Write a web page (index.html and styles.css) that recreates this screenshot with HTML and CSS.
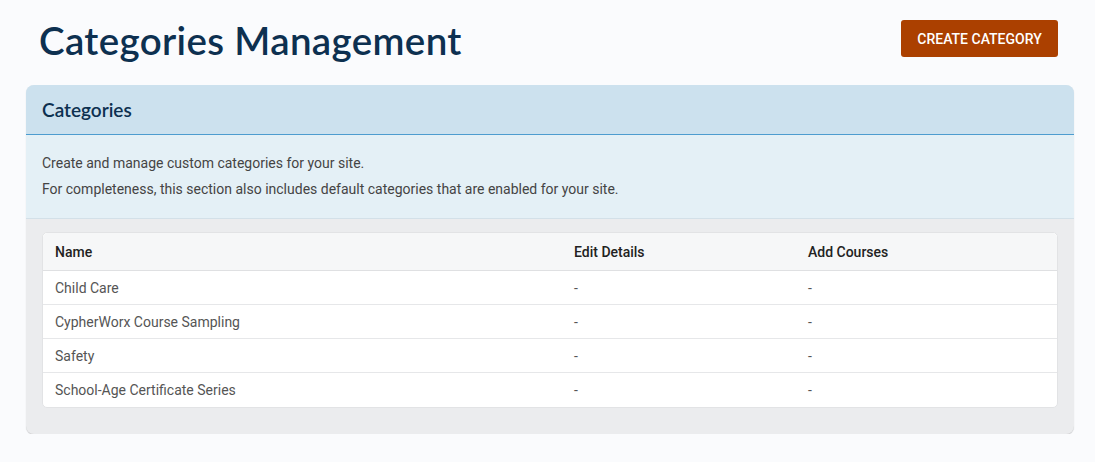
FILE: index.html
```html
<!DOCTYPE html>
<html>
<head>
<meta charset="utf-8">
<link rel="stylesheet" href="styles.css">
</head>
<body>
<div class="page">
  <div class="topbar">
    <h1 class="title">Categories Management</h1>
    <button class="btn-create">CREATE CATEGORY</button>
  </div>
  <section class="card">
    <div class="card-head">Categories</div>
    <div class="card-desc">
      <p>Create and manage custom categories for your site.</p>
      <p>For completeness, this section also includes default categories that are enabled for your site.</p>
    </div>
    <div class="card-body">
      <table class="cat-table">
        <thead>
          <tr><th class="c-name">Name</th><th class="c-edit">Edit Details</th><th class="c-add">Add Courses</th></tr>
        </thead>
        <tbody>
          <tr><td>Child Care</td><td>-</td><td>-</td></tr>
          <tr><td>CypherWorx Course Sampling</td><td>-</td><td>-</td></tr>
          <tr><td>Safety</td><td>-</td><td>-</td></tr>
          <tr><td>School-Age Certificate Series</td><td>-</td><td>-</td></tr>
        </tbody>
      </table>
    </div>
  </section>
</div>
</body>
</html>
```
FILE: styles.css
```css
* { box-sizing: border-box; }
html, body { margin: 0; padding: 0; }
body {
  background: #fafbfd;
  font-family: Roboto, "Liberation Sans", sans-serif;
  color: #444;
}
.page {
  padding: 20px 21px 0 26px;
}
.topbar {
  display: flex;
  justify-content: space-between;
  align-items: flex-start;
  height: 65px;
}
.title {
  margin: 0;
  padding-left: 13px;
  font-family: Lato, "Open Sans", sans-serif;
  font-weight: 600;
  font-size: 38.5px;
  line-height: 40px;
  color: #0d3050;
  letter-spacing: 0.35px;
}
.btn-create {
  margin-right: 16px;
  width: 157px;
  height: 37px;
  border: none;
  border-radius: 3px;
  background: #ab4000;
  color: #fff;
  font-family: Roboto, "Liberation Sans", sans-serif;
  font-weight: 500;
  font-size: 14px;
  padding: 0;
}
.card {
  border-radius: 8px;
  overflow: hidden;
  background: #ebecee;
  box-shadow: 0 1px 1px rgba(0,0,0,0.18);
}
.card-head {
  background: #cce1ee;
  height: 50px;
  padding: 13px 16px 0;
  font-family: Lato, "Open Sans", sans-serif;
  font-weight: 600;
  font-size: 19px;
  color: #0d3050;
  border-bottom: 1px solid #4d9ccf;
}
.card-desc {
  background: #e4f0f6;
  padding: 15px 16px 16px;
  border-bottom: 1px solid #d3e0e8;
  font-size: 14px;
  color: #444;
}
.card-desc p {
  margin: 0;
  line-height: 26px;
}
.card-body {
  padding: 13px 16px 26px;
}
.cat-table {
  width: 100%;
  border-collapse: separate;
  border-spacing: 0;
  background: #fff;
  border: 1px solid #e2e3e5;
  border-radius: 5px;
  font-size: 14px;
}
.cat-table th {
  background: #f6f7f8;
  text-align: left;
  font-weight: 500;
  color: #222;
  height: 38px;
  padding: 0 12px;
  border-bottom: 1px solid #dfe0e2;
}
.cat-table th.c-name { width: 519px; border-top-left-radius: 5px; }
.cat-table th.c-edit { width: 234px; }
.cat-table th.c-add { border-top-right-radius: 5px; }
.cat-table td {
  height: 34px;
  padding: 0 12px;
  color: #555;
  border-bottom: 1px solid #e6e7e9;
}
.cat-table tbody tr:last-child td { border-bottom: none; }
```
